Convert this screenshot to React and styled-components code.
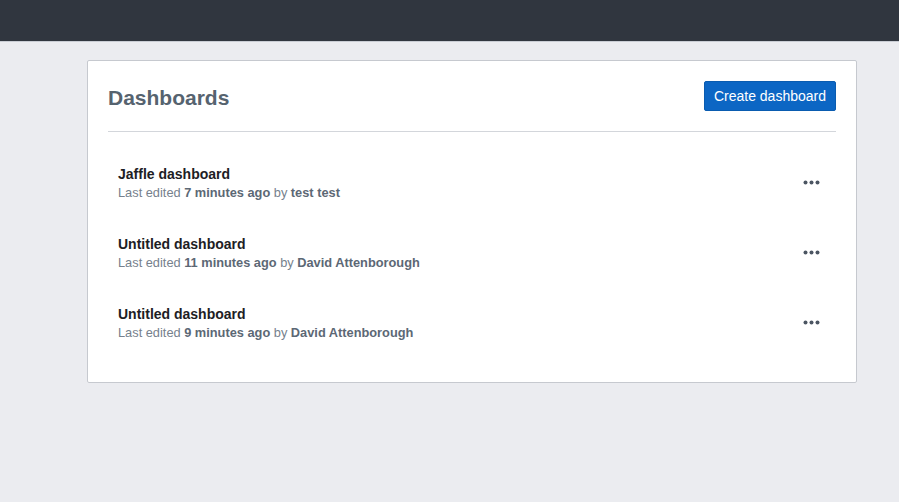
import React from 'react';
import styled, { createGlobalStyle } from 'styled-components';

const GlobalStyle = createGlobalStyle`
  body {
    margin: 0;
    background: #ebecf0;
    font-family: 'Liberation Sans', Arial, sans-serif;
  }
`;

const NavBar = styled.div`
  height: 41px;
  background: #30363f;
  border-bottom: 1px solid #c9cdd4;
`;

const Page = styled.div`
  padding: 18px 0 0 87px;
`;

const Card = styled.div`
  width: 728px;
  background: #fff;
  border: 1px solid #c6c9cf;
  border-radius: 2px;
  padding: 20px;
`;

const Header = styled.div`
  display: flex;
  align-items: center;
  justify-content: space-between;
  padding-bottom: 20px;
  border-bottom: 1px solid #d3d6db;
`;

const Title = styled.h1`
  margin: 3px 0 0;
  font-size: 21px;
  font-weight: 600;
  color: #56636f;
`;

const PrimaryButton = styled.button`
  height: 30px;
  padding: 0 9px;
  border: 1px solid #0a5cb0;
  border-radius: 2px;
  background: #0c66c4;
  color: #fff;
  font-family: inherit;
  font-size: 14px;
  cursor: pointer;
`;

const List = styled.div`
  padding: 15px 0 5px;
`;

const Row = styled.div`
  display: flex;
  align-items: center;
  justify-content: space-between;
  height: 70px;
  box-sizing: border-box;
  padding: 0 10px;
`;

const RowName = styled.div`
  font-size: 14px;
  font-weight: 700;
  line-height: 20px;
  color: #1d2024;
`;

const RowMeta = styled.div`
  margin-top: 1px;
  font-size: 12.8px;
  line-height: 16px;
  color: #76818d;

  strong {
    color: #5c6875;
  }
`;

const MenuButton = styled.button`
  display: flex;
  padding: 6px;
  border: none;
  background: none;
  cursor: pointer;
`;

const dashboards = [
  { name: 'Jaffle dashboard', when: '7 minutes ago', by: 'test test' },
  { name: 'Untitled dashboard', when: '11 minutes ago', by: 'David Attenborough' },
  { name: 'Untitled dashboard', when: '9 minutes ago', by: 'David Attenborough' },
];

const Dots = () => (
  <svg width="17" height="5" viewBox="0 0 17 5">
    <circle cx="2.5" cy="2.5" r="2" fill="#4b5562" />
    <circle cx="8.5" cy="2.5" r="2" fill="#4b5562" />
    <circle cx="14.5" cy="2.5" r="2" fill="#4b5562" />
  </svg>
);

export default function App() {
  return (
    <>
      <GlobalStyle />
      <NavBar />
      <Page>
        <Card>
          <Header>
            <Title>Dashboards</Title>
            <PrimaryButton>Create dashboard</PrimaryButton>
          </Header>
          <List>
            {dashboards.map((d, i) => (
              <Row key={i}>
                <div>
                  <RowName>{d.name}</RowName>
                  <RowMeta>
                    Last edited <strong>{d.when}</strong> by <strong>{d.by}</strong>
                  </RowMeta>
                </div>
                <MenuButton>
                  <Dots />
                </MenuButton>
              </Row>
            ))}
          </List>
        </Card>
      </Page>
    </>
  );
}
